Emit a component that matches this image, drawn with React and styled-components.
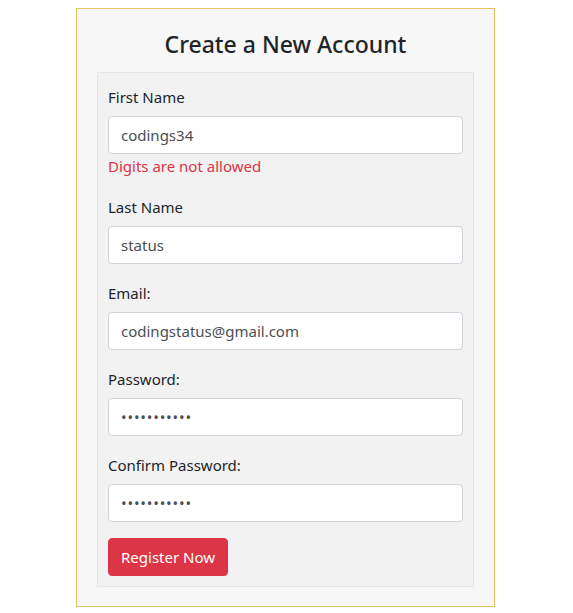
import React from 'react';
import styled, { createGlobalStyle } from 'styled-components';

const GlobalStyle = createGlobalStyle`
  body {
    margin: 8px;
    background: #ffffff;
    font-family: "Segoe UI", "Noto Sans", "Open Sans", sans-serif;
    color: #212529;
  }
  * { box-sizing: border-box; }
`;

const Card = styled.div`
  width: 419px;
  margin: 0 auto;
  transform: translateX(-1px);
  padding: 19px 20px 19px;
  background: #f7f7f7;
  border: 1px solid #e2c263;
`;

const Title = styled.h2`
  margin: 0 0 12px;
  font-size: 23px;
  font-weight: 500;
  line-height: 32px;
  text-align: center;
  color: #212529;
`;

const FormBox = styled.form`
  background: #f2f2f2;
  border: 1px solid #e6e6e6;
  padding: 12px 10px 10px;
`;

const Field = styled.div`
  margin-bottom: 17px;
  &:last-of-type {
    margin-bottom: 16px;
  }
`;

const Label = styled.label`
  display: block;
  font-size: 15px;
  line-height: 24px;
  margin-bottom: 7px;
`;

const Input = styled.input`
  display: block;
  width: 100%;
  height: 38px;
  padding: 6px 12px;
  font-family: inherit;
  font-size: 15px;
  color: #495057;
  background: #ffffff;
  border: 1px solid #ced4da;
  border-radius: 4px;
  outline: none;
  &[type='password'] {
    letter-spacing: 0.8px;
  }
`;

const ErrorText = styled.div`
  font-size: 15px;
  line-height: 24px;
  color: #dc3545;
`;

const Button = styled.button`
  display: block;
  height: 38px;
  width: 120px;
  padding: 0 12px;
  font-family: inherit;
  font-size: 15px;
  color: #ffffff;
  background: #dc3545;
  border: 1px solid #dc3545;
  border-radius: 4px;
  cursor: pointer;
`;

const fields = [
  { label: 'First Name', value: 'codings34', type: 'text', error: 'Digits are not allowed' },
  { label: 'Last Name', value: 'status', type: 'text' },
  { label: 'Email:', value: 'codingstatus@gmail.com', type: 'text' },
  { label: 'Password:', value: 'password123', type: 'password' },
  { label: 'Confirm Password:', value: 'password123', type: 'password' },
];

export default function App() {
  return (
    <>
      <GlobalStyle />
      <Card>
        <Title>Create a New Account</Title>
        <FormBox onSubmit={e => e.preventDefault()}>
          {fields.map(f => (
            <Field key={f.label}>
              <Label>{f.label}</Label>
              <Input type={f.type} defaultValue={f.value} />
              {f.error && <ErrorText>{f.error}</ErrorText>}
            </Field>
          ))}
          <Button type="submit">Register Now</Button>
        </FormBox>
      </Card>
    </>
  );
}
